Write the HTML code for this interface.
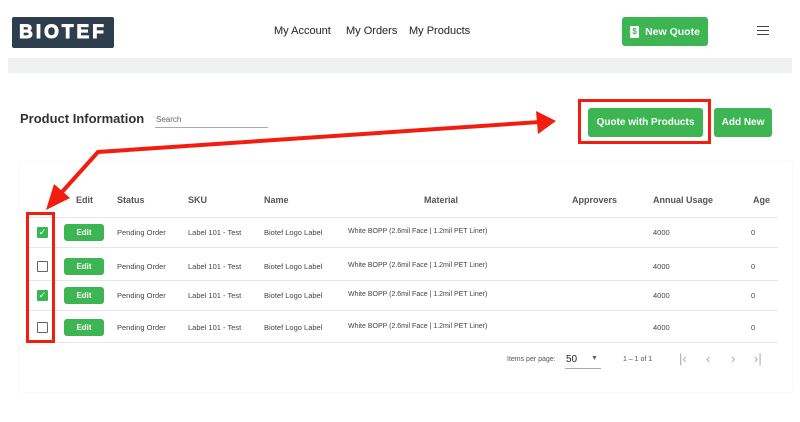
<!DOCTYPE html>
<html><head><style>
*{margin:0;padding:0;box-sizing:border-box}
body{width:800px;height:422px;background:#fff;font-family:"Liberation Sans",sans-serif;position:relative;overflow:hidden;color:#333}
.a{position:absolute;white-space:nowrap}
.btn{position:absolute;background:#3cb552;color:#fff;font-weight:bold;border-radius:3px;display:flex;align-items:center;justify-content:center}
.nav{font-size:11px;color:#333;top:25px;font-weight:bold;-webkit-text-stroke:0.1px}
.th{font-size:9px;font-weight:bold;color:#555;top:195px}
.td{font-size:7.5px;color:#444}
.line{position:absolute;left:26px;width:752px;height:1px;background:#e6e6e6}
.cb{position:absolute;left:37px;width:11px;height:11px;border:1.5px solid #666;border-radius:1px}
.cb.on{background:#3cb552;border-color:#3cb552;color:#fff;font-size:9px;line-height:9px;text-align:center}
.eb{left:64px;width:40px;height:17px;font-size:8px}
.pg{position:absolute;top:351px;font-size:13px;color:#aaa}
</style></head><body>
<div class="a" style="left:12px;top:17px;width:102px;height:31px;background:#2f3e4c;border-radius:2px;color:#fff;font-weight:900;font-size:19px;letter-spacing:3px;line-height:31px;text-align:center;-webkit-text-stroke:1px #fff">BIOTEF</div>
<div class="a nav" style="left:274px;font-weight:normal">My Account</div>
<div class="a nav" style="left:346px;font-weight:normal">My Orders</div>
<div class="a nav" style="left:409px;font-weight:normal">My Products</div>
<div class="btn" style="left:622px;top:17px;width:86px;height:29px;font-size:10.5px"><span style="display:inline-block;width:9px;height:12px;background:#fff;border-radius:1px;margin-right:6px;color:#3cb552;font-size:8px;line-height:12px;text-align:center">$</span>New Quote</div>
<div class="a" style="left:757px;top:26px;width:12px;height:9px;border-top:1.5px solid #444;border-bottom:1.5px solid #444"><div style="margin-top:2.5px;height:1.5px;background:#444"></div></div>
<div class="a" style="left:8px;top:58px;width:784px;height:15px;background:#f0f1f2"></div>
<div class="a" style="left:20px;top:111px;font-size:13px;font-weight:bold;color:#333">Product Information</div>
<div class="a" style="left:156px;top:115px;font-size:8px;color:#666">Search</div>
<div class="a" style="left:155px;top:127px;width:113px;height:1px;background:#aaa"></div>
<div class="a" style="left:578px;top:99px;width:133px;height:45px;border:3px solid #f21d0f"></div>
<div class="btn" style="left:588px;top:108px;width:115px;height:29px;font-size:10px">Quote with Products</div>
<div class="btn" style="left:714px;top:108px;width:58px;height:29px;font-size:10px">Add New</div>
<div class="a" style="left:20px;top:162px;width:772px;height:230px;box-shadow:0 0 3px rgba(0,0,0,.05)"></div>
<div class="a th" style="left:76px">Edit</div>
<div class="a th" style="left:117px">Status</div>
<div class="a th" style="left:188px">SKU</div>
<div class="a th" style="left:264px">Name</div>
<div class="a th" style="left:424px">Material</div>
<div class="a th" style="left:572px">Approvers</div>
<div class="a th" style="left:653px">Annual Usage</div>
<div class="a th" style="left:753px">Age</div>
<div class="line" style="top:217px"></div>
<div class="line" style="top:247px"></div>
<div class="line" style="top:280px"></div>
<div class="line" style="top:310px"></div>
<div class="line" style="top:342px"></div>
<div class="cb on" style="top:227px">✓</div>
<div class="cb" style="top:261px"></div>
<div class="cb on" style="top:290px">✓</div>
<div class="cb" style="top:322px"></div>
<div class="btn eb" style="top:224px">Edit</div>
<div class="btn eb" style="top:258px">Edit</div>
<div class="btn eb" style="top:287px">Edit</div>
<div class="btn eb" style="top:319px">Edit</div>
<div class="a td" style="left:117px;top:228px">Pending Order</div>
<div class="a td" style="left:117px;top:262px">Pending Order</div>
<div class="a td" style="left:117px;top:291px">Pending Order</div>
<div class="a td" style="left:117px;top:323px">Pending Order</div>
<div class="a td" style="left:188px;top:228px">Label 101 - Test</div>
<div class="a td" style="left:188px;top:262px">Label 101 - Test</div>
<div class="a td" style="left:188px;top:291px">Label 101 - Test</div>
<div class="a td" style="left:188px;top:323px">Label 101 - Test</div>
<div class="a td" style="left:264px;top:228px">Biotef Logo Label</div>
<div class="a td" style="left:264px;top:262px">Biotef Logo Label</div>
<div class="a td" style="left:264px;top:291px">Biotef Logo Label</div>
<div class="a td" style="left:264px;top:323px">Biotef Logo Label</div>
<div class="a td" style="left:348px;top:228px;font-size:7px">White BOPP (2.6mil Face | 1.2mil PET Liner)</div>
<div class="a td" style="left:348px;top:262px;font-size:7px">White BOPP (2.6mil Face | 1.2mil PET Liner)</div>
<div class="a td" style="left:348px;top:291px;font-size:7px">White BOPP (2.6mil Face | 1.2mil PET Liner)</div>
<div class="a td" style="left:348px;top:323px;font-size:7px">White BOPP (2.6mil Face | 1.2mil PET Liner)</div>
<div class="a td" style="left:653px;top:228px">4000</div>
<div class="a td" style="left:653px;top:262px">4000</div>
<div class="a td" style="left:653px;top:291px">4000</div>
<div class="a td" style="left:653px;top:323px">4000</div>
<div class="a td" style="left:751px;top:228px">0</div>
<div class="a td" style="left:751px;top:262px">0</div>
<div class="a td" style="left:751px;top:291px">0</div>
<div class="a td" style="left:751px;top:323px">0</div>
<div class="a" style="left:507px;top:356px;font-size:7px;color:#555">Items per page:</div>
<div class="a" style="left:566px;top:354px;font-size:10px;color:#222">50</div>
<div class="a" style="left:591px;top:355px;font-size:7px;color:#666">▼</div>
<div class="a" style="left:565px;top:368px;width:36px;height:1px;background:#aaa"></div>
<div class="a" style="left:623px;top:356px;font-size:7px;color:#555">1 – 1 of 1</div>
<div class="pg" style="left:679px">|‹</div>
<div class="pg" style="left:706px">‹</div>
<div class="pg" style="left:731px">›</div>
<div class="pg" style="left:754px">›|</div>
<div class="a" style="left:26px;top:212px;width:29px;height:131px;border:3px solid #f21d0f"></div>
<svg class="a" style="left:0;top:0" width="800" height="422">
<polyline points="540,122 98,152 62,192" fill="none" stroke="#f21d0f" stroke-width="4"/>
<polygon points="556,121 536,111 538,134" fill="#f21d0f"/>
<polygon points="46,210 54,184 70,198" fill="#f21d0f"/>
</svg>
</body></html>
